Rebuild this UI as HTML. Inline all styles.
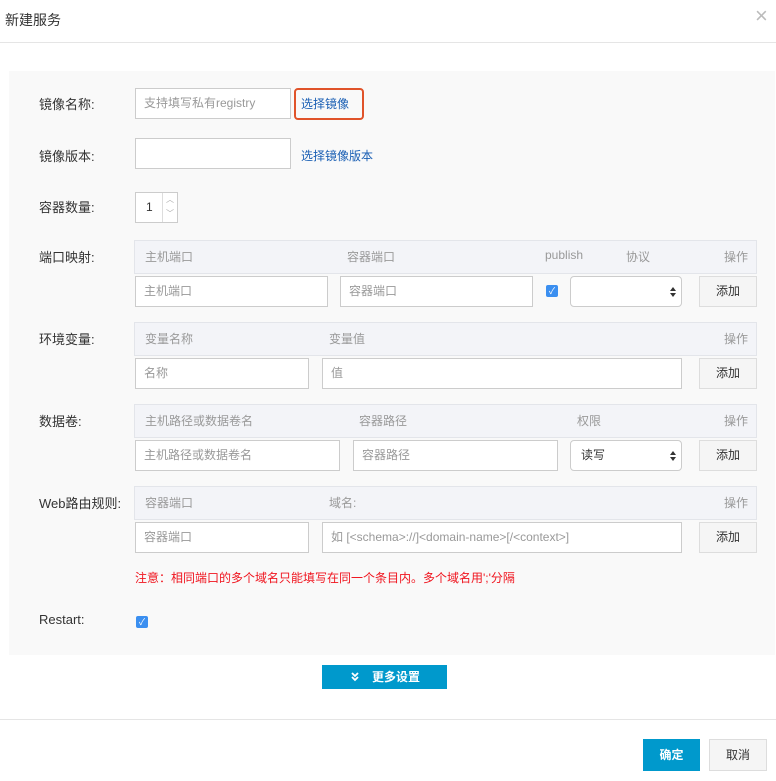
<!DOCTYPE html>
<html><head><meta charset="utf-8"><style>
*{box-sizing:border-box;margin:0;padding:0}
body{width:776px;height:781px;background:#fff;position:relative;font-family:"Liberation Sans","Noto Sans CJK SC",sans-serif;font-size:12px;color:#333;overflow:hidden}
.a{position:absolute}
.lbl{position:absolute;left:39px;font-size:13px;color:#333}
.in{position:absolute;background:#fff;border:1px solid #ccc;height:31px;padding-left:8px;line-height:29px;color:#999;font-size:12px;white-space:nowrap;overflow:hidden}
.hd{position:absolute;left:134px;width:623px;height:34px;background:#f3f4f8;border:1px solid #e3e5ea;color:#999;font-size:12px}
.hd span{position:absolute;top:7px}
.btn{position:absolute;left:699px;width:58px;height:31px;background:#f5f5f5;border:1px solid #ddd;text-align:center;line-height:29px;color:#333;font-size:12px}
.sel{position:absolute;left:570px;width:112px;height:31px;background:#fff;border:1px solid #ccc;border-radius:4px;color:#333;padding-left:10px;line-height:29px}
.sel:after{content:"";position:absolute;right:5px;top:10px;border-left:3px solid transparent;border-right:3px solid transparent;border-bottom:4px solid #333}
.sel:before{content:"";position:absolute;right:5px;top:16px;border-left:3px solid transparent;border-right:3px solid transparent;border-top:4px solid #333}
.cb{position:absolute;width:12px;height:12px;background:#3b8ff0;border-radius:2px;color:#fff;font-size:9px;line-height:12px;text-align:center}
</style></head><body>
<div class="a" style="left:5px;top:10px;font-size:14px;color:#333">新建服务</div>
<div class="a" style="left:755px;top:3px;font-size:22px;color:#bbb;font-weight:300">×</div>
<div class="a" style="left:0;top:42px;width:776px;height:1px;background:#e5e5e5"></div>
<div class="a" style="left:9px;top:71px;width:766px;height:584px;background:#f9f9f9"></div>

<div class="lbl" style="top:94px">镜像名称:</div>
<div class="in" style="left:135px;top:88px;width:156px">支持填写私有registry</div>
<div class="a" style="left:294px;top:88px;width:70px;height:32px;border:2px solid #e0532a;border-radius:4px;color:#1a5fb4;line-height:28px;padding-left:5px;font-size:12px">选择镜像</div>

<div class="lbl" style="top:146px">镜像版本:</div>
<div class="in" style="left:135px;top:138px;width:156px"></div>
<div class="a" style="left:301px;top:147px;color:#1a5fb4">选择镜像版本</div>

<div class="lbl" style="top:197px">容器数量:</div>
<div class="in" style="left:135px;top:192px;width:43px;color:#333;padding-left:10px">1</div>
<div class="a" style="left:162px;top:193px;width:15px;height:29px;border-left:1px solid #ddd;color:#aaa;font-size:8px;text-align:center;line-height:14px">︿<br>﹀</div>

<div class="lbl" style="top:247px">端口映射:</div>
<div class="hd" style="top:240px"><span style="left:10px">主机端口</span><span style="left:212px">容器端口</span><span style="left:410px">publish</span><span style="left:491px">协议</span><span style="left:589px">操作</span></div>
<div class="in" style="left:135px;top:276px;width:193px">主机端口</div>
<div class="in" style="left:340px;top:276px;width:193px">容器端口</div>
<div class="cb" style="left:546px;top:285px">✓</div>
<div class="sel" style="top:276px"></div>
<div class="btn" style="top:276px">添加</div>

<div class="lbl" style="top:329px">环境变量:</div>
<div class="hd" style="top:322px"><span style="left:10px">变量名称</span><span style="left:194px">变量值</span><span style="left:589px">操作</span></div>
<div class="in" style="left:135px;top:358px;width:174px">名称</div>
<div class="in" style="left:322px;top:358px;width:360px">值</div>
<div class="btn" style="top:358px">添加</div>

<div class="lbl" style="top:411px">数据卷:</div>
<div class="hd" style="top:404px"><span style="left:10px">主机路径或数据卷名</span><span style="left:224px">容器路径</span><span style="left:442px">权限</span><span style="left:589px">操作</span></div>
<div class="in" style="left:135px;top:440px;width:205px">主机路径或数据卷名</div>
<div class="in" style="left:353px;top:440px;width:205px">容器路径</div>
<div class="sel" style="top:440px">读写</div>
<div class="btn" style="top:440px">添加</div>

<div class="lbl" style="top:493px">Web路由规则:</div>
<div class="hd" style="top:486px"><span style="left:10px">容器端口</span><span style="left:194px">域名:</span><span style="left:589px">操作</span></div>
<div class="in" style="left:135px;top:522px;width:174px">容器端口</div>
<div class="in" style="left:322px;top:522px;width:360px">如 [&lt;schema&gt;://]&lt;domain-name&gt;[/&lt;context&gt;]</div>
<div class="btn" style="top:522px">添加</div>

<div class="a" style="left:135px;top:569px;color:#f0141e;font-size:12px">注意：相同端口的多个域名只能填写在同一个条目内。多个域名用';'分隔</div>

<div class="lbl" style="top:612px">Restart:</div>
<div class="cb" style="left:136px;top:616px">✓</div>

<div class="a" style="left:322px;top:665px;width:125px;height:24px;background:#0099cc;color:#fff;font-weight:bold;line-height:24px;font-size:12px">
<svg style="position:absolute;left:29px;top:7px" width="8" height="10" viewBox="0 0 8 10"><path d="M1 1l3 3 3-3M1 5l3 3 3-3" fill="none" stroke="#fff" stroke-width="1.8"/></svg>
<span style="position:absolute;left:50px">更多设置</span></div>

<div class="a" style="left:0;top:719px;width:776px;height:1px;background:#e5e5e5"></div>
<div class="a" style="left:643px;top:739px;width:57px;height:32px;background:#0099cc;color:#fff;font-weight:bold;text-align:center;line-height:32px">确定</div>
<div class="a" style="left:709px;top:739px;width:58px;height:32px;background:#f5f5f5;border:1px solid #ddd;text-align:center;line-height:30px;color:#333">取消</div>
</body></html>
